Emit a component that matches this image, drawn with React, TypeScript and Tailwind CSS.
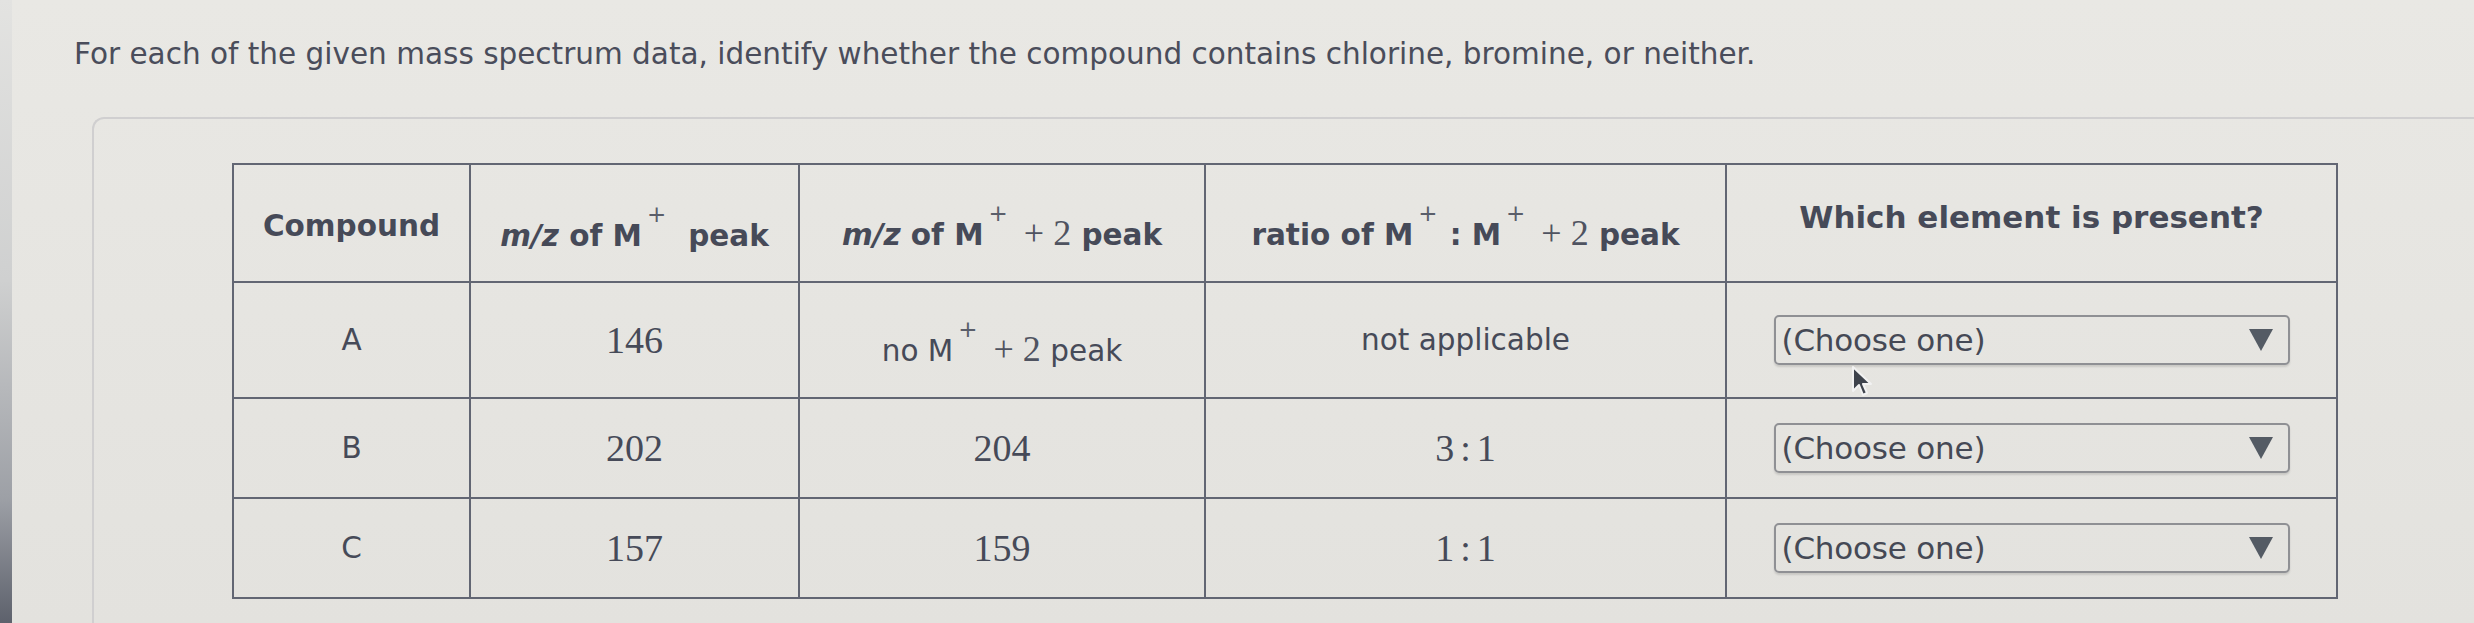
import React from "react";

const Plus = ({ gapRight = "mr-[16px]" }: { gapRight?: string }) => (
  <span className={`align-[1.05em] text-[23px] font-normal font-['DejaVu_Sans',sans-serif] text-[#5a5e6a] ml-[5px] ${gapRight}`}>+</span>
);

const Triangle = () => (
  <svg width="26" height="24" viewBox="0 0 26 24" className="shrink-0">
    <path d="M1 1 L25 1 L13 23 Z" fill="#545b64" />
  </svg>
);

const Dropdown = () => (
  <div className="w-[516px] h-[50px] mx-auto border-2 border-[#8f9094] rounded-[5px] flex items-center justify-between pl-[6px] pr-[14px] shadow-[0_2px_2px_rgba(0,0,0,0.12)] text-[31px] tracking-[-0.2px] text-[#454955]">
    <span>(Choose one)</span>
    <Triangle />
  </div>
);

const Cursor = () => (
  <svg width="22" height="32" viewBox="0 0 22 32" className="absolute left-[1851px] top-[365px]">
    <path d="M2 2 L2 26 L8 20 L12 30 L16 28 L12 19 L20 19 Z" fill="#3e434c" stroke="#f2f2f2" strokeWidth="2" strokeLinejoin="round" />
  </svg>
);

export default function App() {
  const cell = "border-2 border-[#626673] text-center align-middle p-0";
  const serif = "font-['Liberation_Serif',serif] text-[38px] font-normal";
  const serifPlus = "font-['Liberation_Serif',serif] text-[36px] font-normal text-[#4f5360]";
  return (
    <div className="relative w-full h-[623px] overflow-hidden flex bg-[linear-gradient(to_bottom,#e9e8e4,#e3e2de)] font-['DejaVu_Sans',sans-serif] text-[#464a58]">
      <div className="w-[12px] shrink-0 bg-[linear-gradient(to_bottom,#e3e3e1_0%,#cfd0d0_45%,#9da0a6_80%,#5d616c_100%)]" />
      <div className="flex-1 flex flex-col">
        <div className="pl-[62px] pt-[37px] text-[29.5px] leading-[34px] text-[#4a4d5b]">
          For each of the given mass spectrum data, identify whether the compound contains chlorine, bromine, or neither.
        </div>
        <div className="ml-[80px] mt-[46px] flex-1 border-t-2 border-l-2 border-[#d0cfd0] rounded-tl-[12px] pl-[138px] pt-[44px]">
          <table className="border-collapse w-[2104px] table-fixed">
            <colgroup>
              <col className="w-[237px]" />
              <col className="w-[329px]" />
              <col className="w-[406px]" />
              <col className="w-[521px]" />
              <col className="w-[611px]" />
            </colgroup>
            <thead>
              <tr className="h-[118px] text-[29.5px] font-bold">
                <th className={`${cell} pt-[6px]`}>Compound</th>
                <th className={cell}>
                  <span className="inline-block pt-[10px]">
                    <span className="italic">m/z</span> of M<Plus gapRight="mr-[22px]" />peak
                  </span>
                </th>
                <th className={cell}>
                  <span className="inline-block pt-[10px]">
                    <span className="italic">m/z</span> of M<Plus />
                    <span className={serifPlus}>+ 2</span> peak
                  </span>
                </th>
                <th className={cell}>
                  <span className="inline-block pt-[10px]">
                    ratio of M<Plus gapRight="mr-[12px]" />: M<Plus />
                    <span className={serifPlus}>+ 2</span> peak
                  </span>
                </th>
                <th className={`${cell} pb-[12px] text-[31px]`}>Which element is present?</th>
              </tr>
            </thead>
            <tbody className="text-[29.5px]">
              <tr className="h-[116px]">
                <td className={cell}>A</td>
                <td className={cell}><span className={serif}>146</span></td>
                <td className={cell}>
                  <span className="inline-block pt-[8px]">
                    no M<Plus /><span className={serifPlus}>+ 2</span> peak
                  </span>
                </td>
                <td className={cell}>not applicable</td>
                <td className={cell}><Dropdown /></td>
              </tr>
              <tr className="h-[100px]">
                <td className={cell}>B</td>
                <td className={cell}><span className={serif}>202</span></td>
                <td className={cell}><span className={serif}>204</span></td>
                <td className={cell}>
                  <span className={serif}>3<span className="mx-[6px]">:</span>1</span>
                </td>
                <td className={cell}><Dropdown /></td>
              </tr>
              <tr className="h-[100px]">
                <td className={cell}>C</td>
                <td className={cell}><span className={serif}>157</span></td>
                <td className={cell}><span className={serif}>159</span></td>
                <td className={cell}>
                  <span className={serif}>1<span className="mx-[6px]">:</span>1</span>
                </td>
                <td className={cell}><Dropdown /></td>
              </tr>
            </tbody>
          </table>
        </div>
      </div>
      <Cursor />
    </div>
  );
}
